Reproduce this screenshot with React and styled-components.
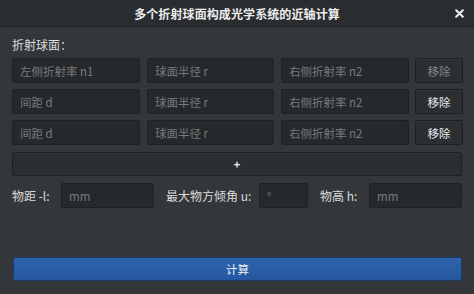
import React from "react";
import styled, { createGlobalStyle } from "styled-components";

const GlobalStyle = createGlobalStyle`
   html, body {
      margin: 0;
      padding: 0;
      background: #33373a;
   }
   * {
      box-sizing: border-box;
   }
   input::placeholder {
      color: #77797c;
      opacity: 1;
   }
`;

const surfaces = [
   { left: "左侧折射率 n1", canRemove: false },
   { left: "间距 d", canRemove: true },
   { left: "间距 d", canRemove: true },
];

const App = () => {
   return (
      <>
         <GlobalStyle />
         <Window>
            <TitleBar>
               <Title>多个折射球面构成光学系统的近轴计算</Title>
               <CloseButton aria-label="close">
                  <svg width="9" height="9" viewBox="0 0 9 9">
                     <path
                        d="M1.2 1.2 L7.8 7.8 M7.8 1.2 L1.2 7.8"
                        stroke="#f2f2f2"
                        strokeWidth="2"
                        strokeLinecap="round"
                     />
                  </svg>
               </CloseButton>
            </TitleBar>
            <Content>
               <SectionLabel>折射球面：</SectionLabel>
               <Rows>
                  {surfaces.map((s, i) => (
                     <SurfaceRow key={i}>
                        <Field placeholder={s.left} />
                        <Field placeholder="球面半径 r" />
                        <Field placeholder="右侧折射率 n2" />
                        <Button disabled={!s.canRemove}>移除</Button>
                     </SurfaceRow>
                  ))}
               </Rows>
               <AddButton>+</AddButton>
               <ParamRow>
                  <Param labelWidth={49}>
                     <ParamLabel>物距 -l:</ParamLabel>
                     <Field placeholder="mm" />
                  </Param>
                  <Param labelWidth={93}>
                     <ParamLabel>最大物方倾角 u:</ParamLabel>
                     <Field placeholder="°" />
                  </Param>
                  <Param labelWidth={49}>
                     <ParamLabel>物高 h:</ParamLabel>
                     <Field placeholder="mm" />
                  </Param>
               </ParamRow>
               <Spacer />
               <ComputeButton>计算</ComputeButton>
            </Content>
         </Window>
      </>
   );
};

const font = `"Noto Sans CJK SC", "Noto Sans", "DejaVu Sans", sans-serif`;

const Window = styled.div`
   width: 474px;
   height: 294px;
   display: flex;
   flex-direction: column;
   background: #33373a;
   font-family: ${font};
   color: #dcdcdc;
`;

const TitleBar = styled.div`
   height: 27px;
   flex-shrink: 0;
   position: relative;
   display: flex;
   align-items: center;
   justify-content: center;
   background: #2a2d30;
   border-bottom: 1px solid #1d1f21;
`;

const Title = styled.div`
   font-size: 12px;
   font-weight: 700;
   color: #eeeeee;
   letter-spacing: 0.1px;
`;

const CloseButton = styled.div`
   position: absolute;
   right: 10px;
   top: 9px;
   display: flex;
`;

const Content = styled.div`
   flex: 1;
   display: flex;
   flex-direction: column;
   padding: 11px 12px 13px;
`;

const SectionLabel = styled.div`
   font-size: 12px;
   line-height: 14px;
   color: #dedede;
   height: 14px;
   margin-bottom: 6px;
`;

const Rows = styled.div`
   display: flex;
   flex-direction: column;
   gap: 6px;
`;

const SurfaceRow = styled.div`
   display: grid;
   grid-template-columns: 128px 127px 128px 47px;
   column-gap: 7px;
   height: 25px;
   & > button {
      margin-left: -1px;
   }
`;

const Field = styled.input`
   width: 100%;
   height: 25px;
   min-width: 0;
   padding: 0 7px;
   background: #26292c;
   border: 1px solid #1f2224;
   border-radius: 2px;
   font-family: ${font};
   font-size: 11.5px;
   color: #dddddd;
   outline: none;
`;

const Button = styled.button`
   height: 25px;
   padding: 0;
   background: #2c2f32;
   border: 1px solid #1d1f21;
   border-radius: 2px;
   font-family: ${font};
   font-size: 11.5px;
   color: ${(p) => (p.disabled ? "#84878a" : "#eeeeee")};
   box-shadow: inset 0 1px 0 rgba(255, 255, 255, 0.03);
`;

const AddButton = styled(Button)`
   margin-top: 7px;
   height: 24px;
   width: 100%;
   font-size: 11px;
   font-weight: 700;
   color: #eeeeee;
`;

const ParamRow = styled.div`
   margin-top: 7px;
   display: grid;
   grid-template-columns: 142px 142px 142px;
   column-gap: 12px;
   height: 25px;
`;

const Param = styled.div`
   display: grid;
   grid-template-columns: ${(p) => p.labelWidth}px 1fr;
   align-items: center;
`;

const ParamLabel = styled.span`
   font-size: 12px;
   color: #dcdcdc;
   white-space: nowrap;
`;

const Spacer = styled.div`
   flex: 1;
`;

const ComputeButton = styled.button`
   height: 24px;
   width: 449px;
   margin-left: 1px;
   padding: 0;
   background: linear-gradient(#2e64ad, #2557a0);
   border: 1px solid #1b3a66;
   border-radius: 2px;
   font-family: ${font};
   font-size: 11.5px;
   color: #f2f2f2;
`;

export default App;
